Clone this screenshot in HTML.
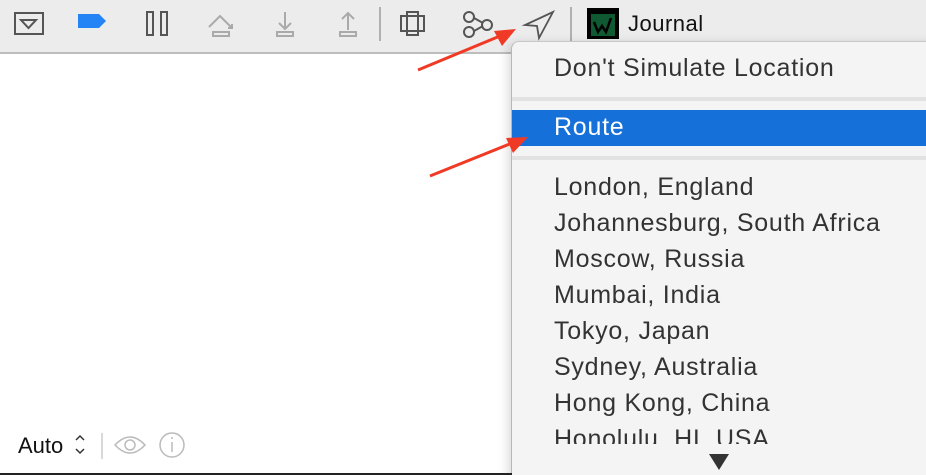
<!DOCTYPE html>
<html><head><meta charset="utf-8"><style>
html,body{margin:0;padding:0;width:926px;height:475px;overflow:hidden;background:#fff;font-family:"Liberation Sans",sans-serif;position:relative}
.tb{position:absolute;left:0;top:0;width:926px;height:52px;background:#ececec;border-bottom:2px solid #bdbdbd}
.a{position:absolute}
.menu{position:absolute;left:511px;top:41px;width:430px;height:450px;background:#f4f4f4;border-radius:8px 0 0 0;border-left:1px solid #b8b8b8;border-top:1px solid #c8c8c8;box-shadow:-3px 2px 10px rgba(0,0,0,.15)}
.it{position:absolute;left:42px;font-size:25px;letter-spacing:0.75px;color:#333;line-height:36px;white-space:nowrap}
.sep{position:absolute;left:0;right:0;height:4px;background:#e2e2e2}
</style></head><body>
<div class="tb"></div>
<svg class="a" style="left:0;top:0" width="640" height="52">
 <rect x="15" y="13" width="28" height="21" fill="none" stroke="#555" stroke-width="2"/>
 <path d="M21 20h15l-7.5 8z" fill="none" stroke="#555" stroke-width="2"/>
 <path d="M78 14h21l7 7-7 7H78z" fill="#2483f5"/>
 <rect x="147" y="12" width="6" height="23" fill="none" stroke="#555" stroke-width="2"/>
 <rect x="161" y="12" width="6" height="23" fill="none" stroke="#555" stroke-width="2"/>
 <g stroke="#aaa" stroke-width="2" fill="none">
  <path d="M209 27l11-11 12 12"/><path d="M232 24v4h-4"/><rect x="213" y="32" width="16" height="4"/>
  <path d="M285 12v17M279 23l6 6 6-6"/><rect x="277" y="32" width="16" height="4"/>
  <path d="M348 13v17M342 19l6-6 6 6"/><rect x="340" y="32" width="16" height="4"/>
 </g>
 <path d="M380 7v34" stroke="#b0b0b0" stroke-width="2"/>
 <g stroke="#555" stroke-width="2" fill="none">
  <rect x="407" y="12" width="11" height="23"/><rect x="401" y="16" width="23" height="15"/>
  <circle cx="469" cy="17" r="5"/><circle cx="469" cy="32" r="5"/><circle cx="487" cy="25" r="5"/>
  <path d="M474 18l9 5M474 31l9-5"/>
  <path d="M553 12l-28 13 12 1 2 12z" stroke-width="1.8"/>
 </g>
 <path d="M571 7v34" stroke="#b0b0b0" stroke-width="2"/>
 <rect x="587" y="8" width="32" height="31" fill="#000"/>
 <path d="M591 14h24v22h-24z" fill="#0f5a32"/>
 <path d="M594 22l4 10 4-6 4 6 5-14" stroke="#000" stroke-width="2.5" fill="none"/>
</svg>
<div class="a" style="left:628px;top:11px;font-size:22px;color:#111;letter-spacing:0.5px">Journal</div>
<div class="menu">
 <div class="it" style="top:8px">Don't Simulate Location</div>
 <div class="sep" style="top:55px"></div>
 <div class="a" style="left:0;right:0;top:68px;height:36px;background:#1670da"></div>
 <div class="it" style="top:67px;color:#fff">Route</div>
 <div class="sep" style="top:114px"></div>
 <div class="it" style="top:127px">London, England</div>
 <div class="it" style="top:163px">Johannesburg, South Africa</div>
 <div class="it" style="top:199px">Moscow, Russia</div>
 <div class="it" style="top:235px">Mumbai, India</div>
 <div class="it" style="top:271px">Tokyo, Japan</div>
 <div class="it" style="top:307px">Sydney, Australia</div>
 <div class="it" style="top:343px">Hong Kong, China</div>
 <div class="a" style="left:0;top:379px;height:23px;width:420px;overflow:hidden"><div class="it" style="top:0">Honolulu, HI, USA</div></div>
 <svg class="a" style="left:197px;top:411px" width="22" height="18"><path d="M0 1h20l-10 16z" fill="#333"/></svg>
</div>
<div class="a" style="left:18px;top:433px;font-size:22px;color:#111">Auto</div>
<svg class="a" style="left:72px;top:430px" width="120" height="32">
 <path d="M4 10l4-4 4 4M4 19l4 4 4-4" stroke="#333" stroke-width="1.5" fill="none"/>
 <path d="M30 3v26" stroke="#ccc" stroke-width="1.5"/>
 <path d="M43 15q15-16 30 0q-15 16-30 0z" stroke="#bbb" stroke-width="1.5" fill="none"/>
 <circle cx="58" cy="15" r="5" stroke="#bbb" stroke-width="1.5" fill="none"/>
 <circle cx="100" cy="15" r="12" stroke="#bbb" stroke-width="1.5" fill="none"/>
 <path d="M100 12v10M100 7v2" stroke="#bbb" stroke-width="1.5"/>
</svg>
<div class="a" style="left:0;top:473px;width:512px;height:2px;background:#222"></div>
<svg class="a" style="left:0;top:0" width="926" height="475">
 <path d="M418 70L500 36" stroke="#f03a25" stroke-width="3"/><path d="M516 29l-22 2 8 15z" fill="#f03a25"/>
 <path d="M430 176L512 143" stroke="#f03a25" stroke-width="3"/><path d="M528 137l-22 1 7 15z" fill="#f03a25"/>
</svg>
</body></html>
